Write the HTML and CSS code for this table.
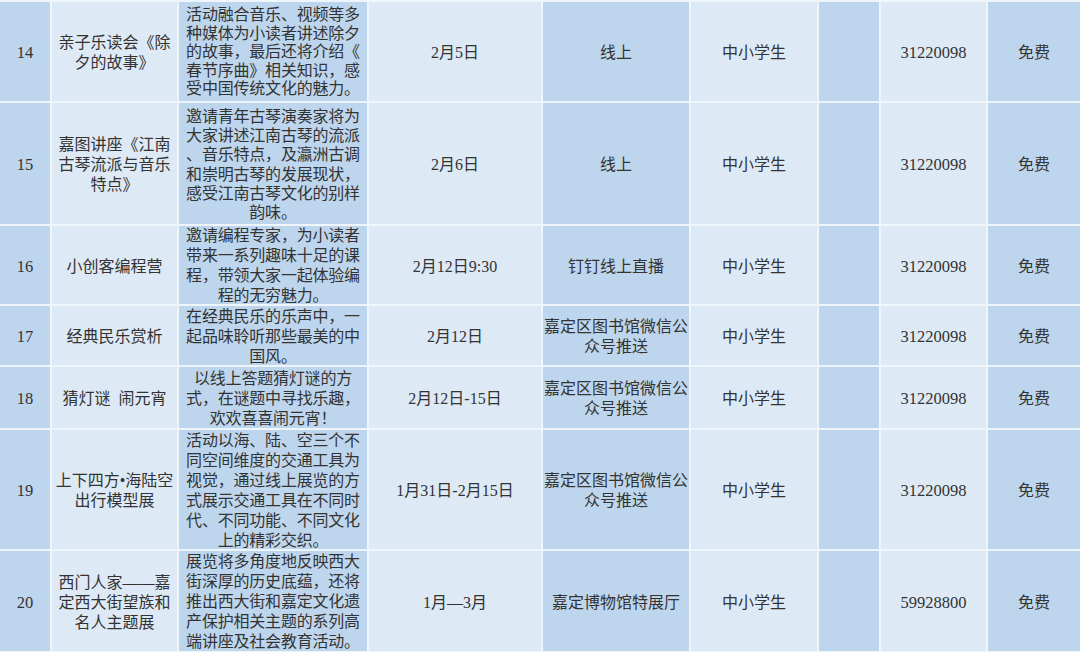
FILE: index.html
```html
<!DOCTYPE html>
<html lang="zh-CN">
<head>
<meta charset="utf-8">
<title>活动列表</title>
<link rel="stylesheet" href="styles.css">
</head>
<body>
<div class="sheet">
  <!-- 14 -->
  <div class="cell dk num">14</div>
  <div class="cell lt">亲子乐读会《除<br>夕的故事》</div>
  <div class="cell dk desc tight1">活动融合音乐、视频等多<br>种媒体为小读者讲述除夕<br>的故事，最后还将介绍《<br>春节序曲》相关知识，感<br>受中国传统文化的魅力。</div>
  <div class="cell lt date">2月5日</div>
  <div class="cell dk">线上</div>
  <div class="cell lt">中小学生</div>
  <div class="cell dk"></div>
  <div class="cell lt num">31220098</div>
  <div class="cell dk">免费</div>
  <!-- 15 -->
  <div class="cell dk num">15</div>
  <div class="cell lt">嘉图讲座《江南<br>古琴流派与音乐<br>特点》</div>
  <div class="cell dk desc tight2">邀请青年古琴演奏家将为<br>大家讲述江南古琴的流派<br>、音乐特点，及瀛洲古调<br>和崇明古琴的发展现状，<br>感受江南古琴文化的别样<br>韵味。</div>
  <div class="cell lt date">2月6日</div>
  <div class="cell dk">线上</div>
  <div class="cell lt">中小学生</div>
  <div class="cell dk"></div>
  <div class="cell lt num">31220098</div>
  <div class="cell dk">免费</div>
  <!-- 16 -->
  <div class="cell dk num">16</div>
  <div class="cell lt">小创客编程营</div>
  <div class="cell dk desc">邀请编程专家，为小读者<br>带来一系列趣味十足的课<br>程，带领大家一起体验编<br>程的无穷魅力。</div>
  <div class="cell lt date">2月12日9:30</div>
  <div class="cell dk">钉钉线上直播</div>
  <div class="cell lt">中小学生</div>
  <div class="cell dk"></div>
  <div class="cell lt num">31220098</div>
  <div class="cell dk">免费</div>
  <!-- 17 -->
  <div class="cell dk num">17</div>
  <div class="cell lt">经典民乐赏析</div>
  <div class="cell dk desc">在经典民乐的乐声中，一<br>起品味聆听那些最美的中<br>国风。</div>
  <div class="cell lt date">2月12日</div>
  <div class="cell dk">嘉定区图书馆微信公<br>众号推送</div>
  <div class="cell lt">中小学生</div>
  <div class="cell dk"></div>
  <div class="cell lt num">31220098</div>
  <div class="cell dk">免费</div>
  <!-- 18 -->
  <div class="cell dk num">18</div>
  <div class="cell lt">猜灯谜&nbsp;&nbsp;闹元宵</div>
  <div class="cell dk desc">以线上答题猜灯谜的方<br>式，在谜题中寻找乐趣，<br>欢欢喜喜闹元宵！</div>
  <div class="cell lt date">2月12日-15日</div>
  <div class="cell dk">嘉定区图书馆微信公<br>众号推送</div>
  <div class="cell lt">中小学生</div>
  <div class="cell dk"></div>
  <div class="cell lt num">31220098</div>
  <div class="cell dk">免费</div>
  <!-- 19 -->
  <div class="cell dk num">19</div>
  <div class="cell lt">上下四方•海陆空<br>出行模型展</div>
  <div class="cell dk desc">活动以海、陆、空三个不<br>同空间维度的交通工具为<br>视觉，通过线上展览的方<br>式展示交通工具在不同时<br>代、不同功能、不同文化<br>上的精彩交织。</div>
  <div class="cell lt date">1月31日-2月15日</div>
  <div class="cell dk">嘉定区图书馆微信公<br>众号推送</div>
  <div class="cell lt">中小学生</div>
  <div class="cell dk"></div>
  <div class="cell lt num">31220098</div>
  <div class="cell dk">免费</div>
  <!-- 20 -->
  <div class="cell dk num">20</div>
  <div class="cell lt">西门人家——嘉<br>定西大街望族和<br>名人主题展</div>
  <div class="cell dk desc">展览将多角度地反映西大<br>街深厚的历史底蕴，还将<br>推出西大街和嘉定文化遗<br>产保护相关主题的系列高<br>端讲座及社会教育活动。</div>
  <div class="cell lt date">1月—3月</div>
  <div class="cell dk">嘉定博物馆特展厅</div>
  <div class="cell lt">中小学生</div>
  <div class="cell dk"></div>
  <div class="cell lt num">59928800</div>
  <div class="cell dk">免费</div>
</div>
</body>
</html>
```

FILE: styles.css
```css
html, body {
  margin: 0;
  padding: 0;
  background: #eef5fb;
}

.sheet {
  width: 1080px;
  height: 652px;
  overflow: hidden;
  padding-top: 2px;
  box-sizing: border-box;
  display: grid;
  grid-template-columns: 50px 125px 188px 172px 146px 126px 60px 105px 92px;
  grid-template-rows: 99px 121px 78px 59px 61px 119px 100px;
  gap: 2px;
  background: #eef5fb;
  font-family: "Liberation Serif", "Noto Sans CJK SC", serif;
  font-size: 16px;
  line-height: 20px;
  color: #333333;
}

.cell {
  display: flex;
  align-items: center;
  justify-content: center;
  text-align: center;
  white-space: nowrap;
  overflow: hidden;
  padding-top: 3px;
  box-sizing: border-box;
}

.dk {
  background: #bed6ed;
}

.lt {
  background: #dde9f5;
}

.num {
  font-size: 16.5px;
}

.desc {
  letter-spacing: -0.2px;
  padding-top: 2px;
}

.tight1 {
  line-height: 18.4px;
}

.tight2 {
  line-height: 19.2px;
}
```
